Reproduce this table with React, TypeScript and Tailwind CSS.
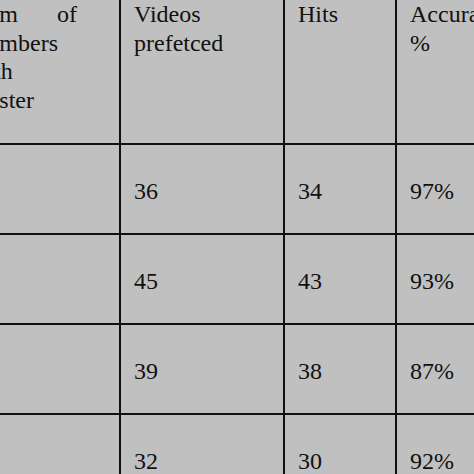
import React from 'react';

const rows = [
    { videos: '36', hits: '34', accuracy: '97%' },
    { videos: '45', hits: '43', accuracy: '93%' },
    { videos: '39', hits: '38', accuracy: '87%' },
    { videos: '32', hits: '30', accuracy: '92%' },
];

const cell = "bg-[#c0c0c0] pl-[13px]";

export default function App() {
    return (
        <div className="w-[474px] h-[474px] overflow-hidden bg-[#c0c0c0] text-[24px] leading-[28.6px] text-[#111]" style={{ fontFamily: '"Liberation Serif", "Times New Roman", serif' }}>
            <div className="grid w-max ml-[-44px] gap-[2px] bg-[#111] grid-cols-[163px_162px_110px_160px] grid-rows-[143px_88px_88px_88px_88px]">
                {/* header */}
                <div className="bg-[#c0c0c0] pl-[14px]">
                    <p className="w-[107px] text-justify">Num of members with cluster</p>
                </div>
                <div className={cell}>
                    <p className="w-[120px]">Videos prefetced</p>
                </div>
                <div className={cell}>
                    <p>Hits</p>
                </div>
                <div className={cell}>
                    <p className="w-[100px]">Accuracy %</p>
                </div>

                {rows.map((r, i) => (
                    <React.Fragment key={i}>
                        <div className="bg-[#c0c0c0]" />
                        <div className={`${cell} pt-[32px]`}>{r.videos}</div>
                        <div className={`${cell} pt-[32px]`}>{r.hits}</div>
                        <div className={`${cell} pt-[32px]`}>{r.accuracy}</div>
                    </React.Fragment>
                ))}
            </div>
        </div>
    );
}
